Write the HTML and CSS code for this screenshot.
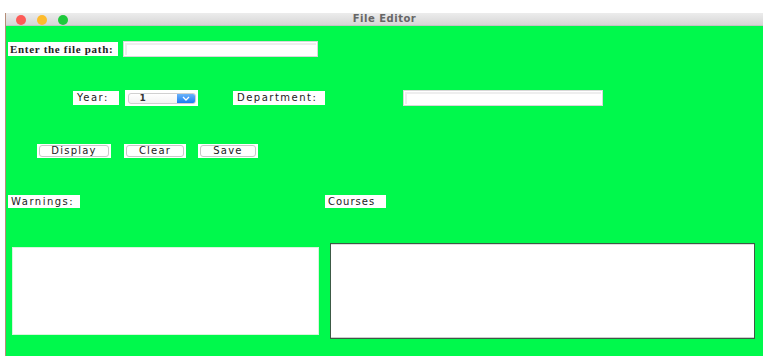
FILE: index.html
```html
<!DOCTYPE html>
<html lang="en">
<head>
    <meta charset="UTF-8">
    <title>File Editor</title>
    <link rel="stylesheet" href="styles.css">
</head>
<body>
    <div class="window">
        <div class="titlebar">
            <div class="lights">
                <span class="light red"></span>
                <span class="light yellow"></span>
                <span class="light green"></span>
            </div>
            <div class="title">File Editor</div>
        </div>

        <div class="content">
            <div class="row row-path">
                <span class="label label-serif">Enter the file path:</span>
                <span class="field field-path"></span>
            </div>

            <div class="row row-year">
                <span class="label label-year">Year:</span>
                <span class="select-wrap">
                    <span class="select">
                        <span class="select-value">1</span>
                        <span class="select-arrow">
                            <svg width="8" height="5" viewBox="0 0 8 5"><path d="M1 1 L4 4 L7 1" fill="none" stroke="#fff" stroke-width="1.3"/></svg>
                        </span>
                    </span>
                </span>
                <span class="label label-dept">Department:</span>
                <span class="field field-dept"></span>
            </div>

            <div class="row row-buttons">
                <span class="btn-wrap btn-display"><button>Display</button></span>
                <span class="btn-wrap btn-clear"><button>Clear</button></span>
                <span class="btn-wrap btn-save"><button>Save</button></span>
            </div>

            <div class="row row-headers">
                <span class="label label-warn">Warnings:</span>
                <span class="label label-courses">Courses</span>
            </div>

            <div class="row row-areas">
                <div class="area area-warn"></div>
                <div class="area area-courses"></div>
            </div>
        </div>
    </div>
</body>
</html>
```

FILE: styles.css
```css
body {
    margin: 0;
    background-color: #fff;
    font-family: "DejaVu Sans", Arial, sans-serif;
}
.window {
    margin: 13px 0 0 5px;
    width: 757px;
    border-left: 1px solid #b58d78;
}

/* barra de titulo */
.titlebar {
    height: 12px;
    background: linear-gradient(#ececec, #d6d6d6);
    border-bottom: 1px solid #c4c4c4;
    position: relative;
}
.lights {
    position: absolute;
    top: 2px;
    left: 10px;
    display: flex;
    gap: 11px;
}
.light {
    width: 10px;
    height: 10px;
    border-radius: 50%;
}
.red { background-color: #fc5b57; }
.yellow { background-color: #fdbb2d; }
.green { background-color: #1ec93c; }
.title {
    text-align: center;
    font-family: "DejaVu Sans", Arial, sans-serif;
    font-size: 10px;
    font-weight: bold;
    letter-spacing: 0.5px;
    line-height: 12px;
    color: #666;
}

/* contenido */
.content {
    background-color: #00f94c;
    height: 330px;
    box-sizing: border-box;
    padding-top: 15px;
    display: flex;
    flex-direction: column;
}
.row {
    display: flex;
    align-items: center;
}
.label {
    background-color: #fff;
    font-size: 10px;
    letter-spacing: 1.5px;
    color: #222;
    height: 14px;
    line-height: 14px;
    box-sizing: border-box;
    padding: 0 3px;
    white-space: nowrap;
    overflow: hidden;
}
.label-serif {
    font-family: "Liberation Serif", "Times New Roman", serif;
    font-weight: bold;
    font-size: 11px;
    letter-spacing: 0.7px;
    color: #222;
    width: 110px;
    padding: 0 2px;
}
.field {
    background-color: #fff;
    height: 16px;
    box-sizing: border-box;
    border: 1px solid #d8d8d8;
    box-shadow: inset 0 0 0 1px #fff, inset 1px 1px 0 2px #eee;
}

.row-path {
    padding-left: 2px;
    height: 16px;
}
.field-path {
    width: 195px;
    margin-left: 5px;
}

.row-year {
    margin-top: 33px;
    height: 16px;
    padding-left: 67px;
}
.label-year {
    width: 46px;
    padding-left: 4px;
}
.select-wrap {
    background-color: #fff;
    width: 73px;
    height: 16px;
    margin-left: 6px;
    display: flex;
    align-items: center;
    justify-content: center;
}
.select {
    width: 68px;
    height: 11px;
    border: 1px solid #d0d0d0;
    border-radius: 3px;
    box-sizing: border-box;
    display: flex;
    background: linear-gradient(#fff, #f3f3f3);
    overflow: hidden;
}
.select-value {
    flex: 1;
    font-size: 9px;
    font-weight: bold;
    line-height: 9px;
    padding-left: 11px;
    color: #333;
}
.select-arrow {
    width: 18px;
    background: linear-gradient(#6cb3fa, #1b7cf3);
    display: flex;
    align-items: center;
    justify-content: center;
}
.label-dept {
    width: 92px;
    margin-left: 35px;
    padding-left: 4px;
}
.field-dept {
    width: 200px;
    margin-left: 78px;
}

/* botones */
.row-buttons {
    margin-top: 38px;
    padding-left: 31px;
    height: 14px;
    gap: 13px;
}
.btn-wrap {
    background-color: #fff;
    height: 14px;
    box-sizing: border-box;
    padding: 1px 2px;
    display: flex;
}
.btn-wrap button {
    flex: 1;
    margin: 0;
    padding: 0;
    font-family: "DejaVu Sans", Arial, sans-serif;
    font-size: 10px;
    letter-spacing: 1.2px;
    color: #222;
    background-color: #fff;
    border: 1px solid #c8c8c8;
    border-radius: 3px;
    line-height: 10px;
}
.btn-display { width: 74px; }
.btn-clear { width: 62px; }
.btn-save { width: 60px; margin-left: -1px; }

/* etiquetas de las areas */
.row-headers {
    margin-top: 37px;
    height: 13px;
    padding-left: 2px;
}
.row-headers .label {
    height: 13px;
    line-height: 13px;
}
.label-warn { width: 72px; }
.label-courses {
    width: 61px;
    margin-left: 245px;
    letter-spacing: 1px;
}

/* areas de texto */
.row-areas {
    margin-top: 35px;
    align-items: flex-start;
    padding-left: 6px;
}
.area {
    background-color: #fff;
    box-sizing: border-box;
}
.area-warn {
    width: 307px;
    height: 88px;
    margin-top: 4px;
    border: 1px solid #d8f5dc;
}
.area-courses {
    width: 425px;
    height: 96px;
    margin-left: 11px;
    border: 1px solid #3c5a45;
    box-shadow: inset 0 -1px 0 #ccc, inset 0 1px 0 #ddd;
}
```
